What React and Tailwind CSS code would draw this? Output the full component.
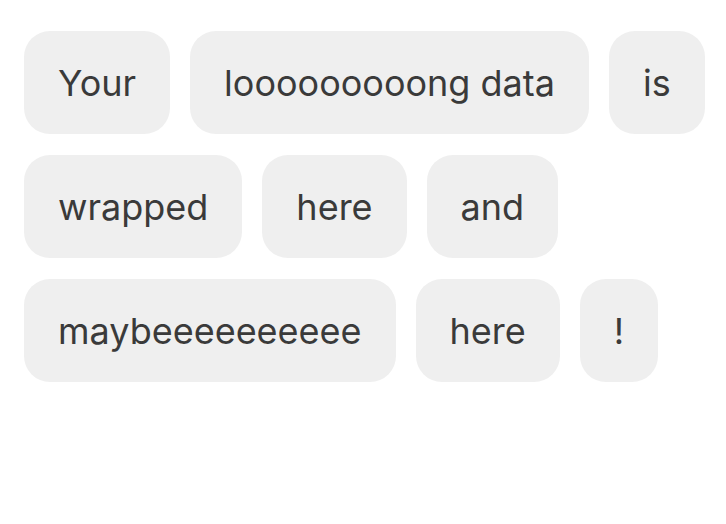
const words = ["Your", "looooooooong data", "is", "wrapped", "here", "and", "maybeeeeeeeeee", "here", "!"];

function Chip({ label }) {
  return (
    <div className="h-[103px] px-[34px] flex items-center rounded-[26px] bg-[#efefef] text-[#3a3a3a] text-[36px] leading-none whitespace-nowrap">
      {label}
    </div>
  );
}

export default function App() {
  return (
    <div className="w-[726px] h-[524px] bg-white pt-[31px] pl-[24px] pr-[16px] font-['Inter',sans-serif]">
      <div className="flex flex-wrap gap-x-[20px] gap-y-[21px]">
        {words.map((w, i) => (
          <Chip key={i} label={w} />
        ))}
      </div>
    </div>
  );
}
